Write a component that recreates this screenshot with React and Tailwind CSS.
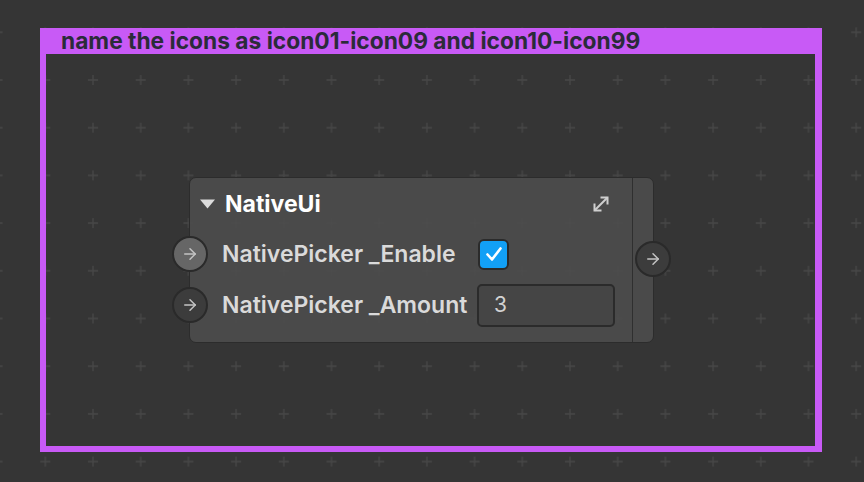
import React from "react";

function Grid() {
  return (
    <svg className="col-start-1 row-start-1 w-[864px] h-[482px]" width="864" height="482">
      <defs>
        <pattern id="plus" patternUnits="userSpaceOnUse" width="47.7" height="47.7" x="-26.25" y="8.45">
          <path d="M18.85 23.85h10M23.85 18.85v10" stroke="#474747" strokeWidth="1.3" fill="none" />
        </pattern>
      </defs>
      <rect width="864" height="482" fill="url(#plus)" />
    </svg>
  );
}

function Arrow({ className = "" }) {
  return (
    <svg width="18" height="18" viewBox="0 0 24 24" fill="none" stroke="currentColor" strokeWidth="2" strokeLinecap="round" strokeLinejoin="round" className={className}>
      <path d="M5 12h14" />
      <path d="M12 5l7 7-7 7" />
    </svg>
  );
}

function Port({ fill }) {
  return (
    <div className={`w-[36px] h-[36px] rounded-full border-2 border-[#2a2a2a] flex items-center justify-center text-[#c4c4c4] ${fill}`}>
      <Arrow />
    </div>
  );
}

export default function App() {
  return (
    <div className="w-[864px] h-[482px] bg-[#353535] grid overflow-hidden" style={{ fontFamily: "Inter, 'Noto Sans', sans-serif" }}>
      <Grid />
      <div className="col-start-1 row-start-1 pt-[28px] pl-[40px]">
        <div className="w-[782px] h-[424px] flex flex-col">
          <div className="h-[26px] bg-[#c85af6] pl-[21px] flex items-center text-[22.75px] font-bold text-[#2b2b3a] leading-none whitespace-nowrap">
            name the icons as icon01-icon09 and icon10-icon99
          </div>
          <div className="flex-1 border-l-[6px] border-r-[7px] border-b-[6px] border-[#c85af6] pl-[143px] pt-[123px]">
            <div className="w-[465px] h-[166px] rounded-[7px] border border-[#2c2c2c] bg-[#4d4d4d]/90 flex">
              <div className="flex-1 flex flex-col">
                <div className="h-[52px] flex items-center pl-[10px] pr-[22px]">
                  <svg width="15" height="10" viewBox="0 0 15 10" className="mr-[10px]">
                    <path d="M0 0.5h15L7.5 9.5z" fill="#dcdcdc" />
                  </svg>
                  <span className="text-[23px] font-bold text-white leading-none">NativeUi</span>
                  <svg width="18" height="18" viewBox="0 0 18 18" fill="none" stroke="#cfcfcf" strokeWidth="2" className="ml-auto">
                    <path d="M2.5 15.5L15.5 2.5" />
                    <path d="M8.5 2.5h7v7" />
                    <path d="M2.5 8.5v7h7" />
                  </svg>
                </div>
                <div className="grid grid-cols-[36px_269px_1fr] gap-y-[3px] -ml-[18px] pr-[17px]">
                  <div className="h-[48px] flex items-center">
                    <Port fill="bg-[#666666]" />
                  </div>
                  <div className="h-[48px] flex items-center pl-[14px] text-[23px] font-semibold text-[#dadada] whitespace-nowrap">
                    NativePicker _Enable
                  </div>
                  <div className="h-[48px] flex items-center pl-px">
                    <div className="w-[31px] h-[31px] rounded-[6px] border-2 border-[#2b2b2b] bg-[#12a0f6] flex items-center justify-center">
                      <svg width="18" height="16" viewBox="0 0 18 16" fill="none" stroke="white" strokeWidth="2.6" strokeLinecap="round" strokeLinejoin="round">
                        <path d="M2.5 8.5l4.5 5L15.5 2.5" />
                      </svg>
                    </div>
                  </div>
                  <div className="h-[48px] flex items-center">
                    <Port fill="bg-[#3c3c3c]" />
                  </div>
                  <div className="h-[48px] flex items-center pl-[14px] text-[23px] font-semibold text-[#dadada] whitespace-nowrap">
                    NativePicker _Amount
                  </div>
                  <div className="h-[48px] flex items-center">
                    <div className="w-[138px] h-[43px] rounded-[5px] border-2 border-[#2b2b2b] bg-[#454545] flex items-center pl-[15px] text-[21px] text-[#d2d2d2]">
                      3
                    </div>
                  </div>
                </div>
              </div>
              <div className="w-[22px] border-l border-[#2f2f2f] flex flex-col items-end">
                <div className="mt-[63px] -mr-[18px]">
                  <Port fill="bg-[#3c3c3c]" />
                </div>
              </div>
            </div>
          </div>
        </div>
      </div>
    </div>
  );
}
